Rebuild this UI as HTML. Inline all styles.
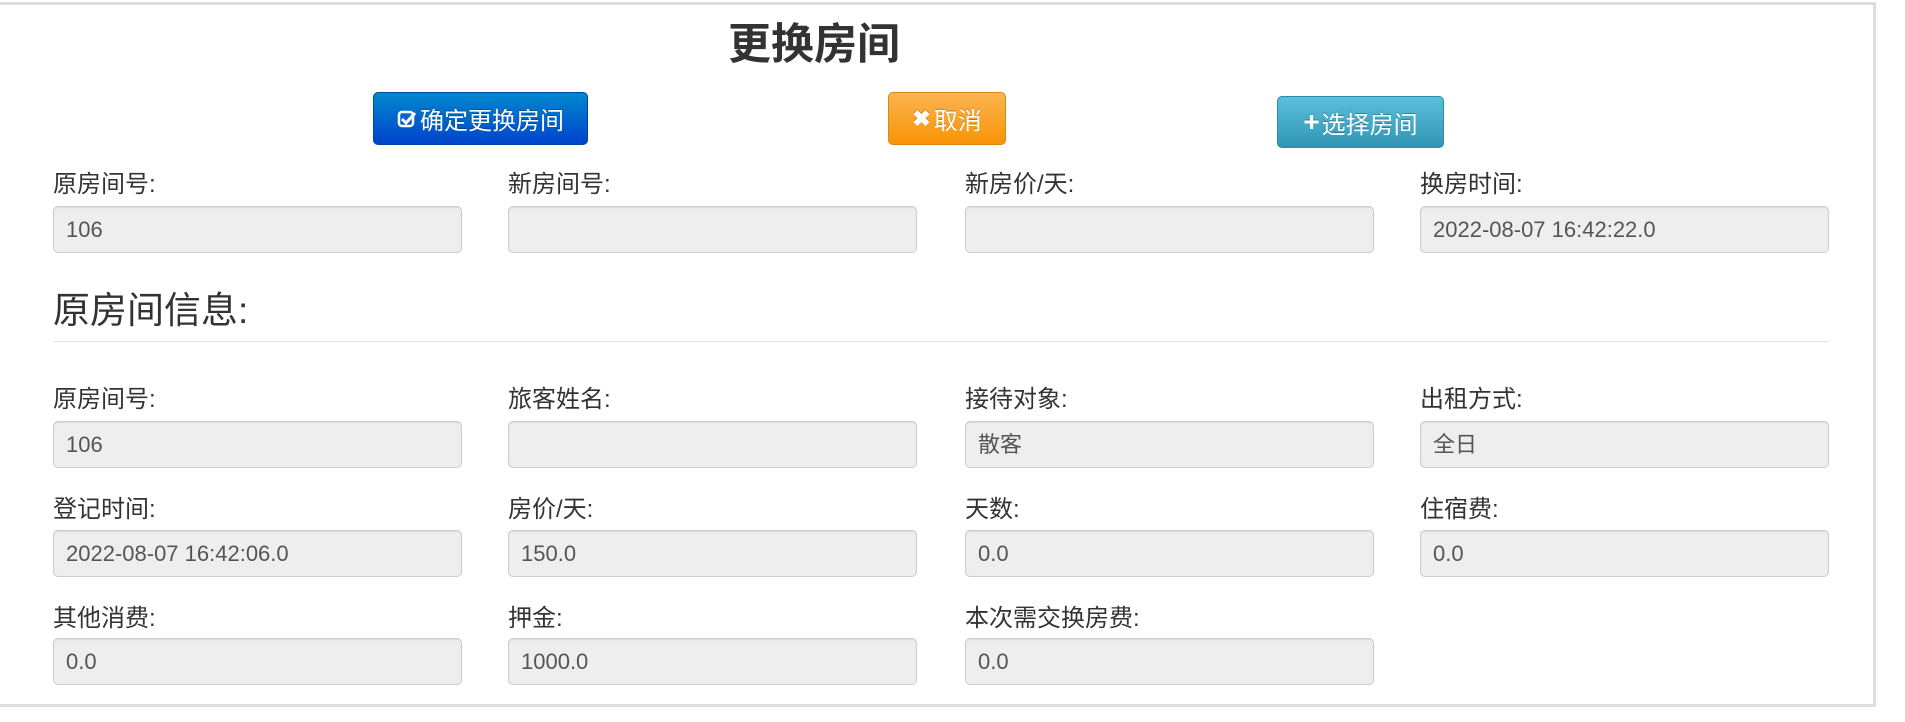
<!DOCTYPE html>
<html><head><meta charset="utf-8"><style>
*{box-sizing:border-box;margin:0;padding:0}
body{width:1905px;height:722px;background:#fff;font-family:"Liberation Sans","Noto Sans CJK SC",sans-serif;color:#333;position:relative;overflow:hidden}
.frame{position:absolute;left:-3px;top:2px;width:1879px;height:705px;border:3px solid #ddd;}
.abs{position:absolute}
.title{left:728px;top:10px;font-size:43px;font-weight:bold;color:#333;white-space:nowrap}
.btn{position:absolute;color:#fff;font-size:24px;border-radius:5px;display:flex;align-items:center;justify-content:center;white-space:nowrap;text-shadow:0 -1px 0 rgba(0,0,0,.25)}
.b1{left:373px;top:92px;width:215px;height:53px;background:linear-gradient(#0088cc,#0044cc);border:1px solid #0044aa}
.b2{left:888px;top:92px;width:118px;height:53px;background:linear-gradient(#fbb450,#f89406);border:1px solid #d88a10}
.b3{left:1277px;top:96px;width:167px;height:52px;background:linear-gradient(#5bc0de,#2f96b4);border:1px solid #2f8aa4}
.lbl{position:absolute;font-size:24px;color:#333;white-space:nowrap}
.inp{position:absolute;height:47px;width:409px;background:#eee;border:1px solid #ccc;border-radius:5px;font-size:22px;color:#555;padding-left:12px;line-height:45px;box-shadow:inset 0 1px 1px rgba(0,0,0,.075)}
.h2{left:53px;top:280px;font-size:37px;color:#333}
.hr{left:53px;top:341px;width:1776px;height:1px;background:#e5e5e5}
</style></head><body>
<div class="frame"></div>
<div class="abs title">更换房间</div>
<div class="btn b1"><svg width="20" height="20" viewBox="0 0 20 20" style="margin-right:3px"><rect x="2" y="3" width="14" height="14" rx="3" fill="none" stroke="#fff" stroke-width="2.5"/><path d="M5 10l4 4 9-10" fill="none" stroke="#fff" stroke-width="3"/></svg>确定更换房间</div>
<div class="btn b2"><span style="font-size:22px;font-weight:bold;margin-right:3px">✖</span>取消</div>
<div class="btn b3"><span style="font-size:28px;font-weight:bold;margin-right:2px">+</span>选择房间</div>

<div class="lbl" style="left:53px;top:164px">原房间号:</div>
<div class="lbl" style="left:508px;top:164px">新房间号:</div>
<div class="lbl" style="left:965px;top:164px">新房价/天:</div>
<div class="lbl" style="left:1420px;top:164px">换房时间:</div>
<div class="inp" style="left:53px;top:206px">106</div>
<div class="inp" style="left:508px;top:206px"></div>
<div class="inp" style="left:965px;top:206px"></div>
<div class="inp" style="left:1420px;top:206px">2022-08-07 16:42:22.0</div>

<div class="abs h2">原房间信息:</div>
<div class="abs hr"></div>

<div class="lbl" style="left:53px;top:379px">原房间号:</div>
<div class="lbl" style="left:508px;top:379px">旅客姓名:</div>
<div class="lbl" style="left:965px;top:379px">接待对象:</div>
<div class="lbl" style="left:1420px;top:379px">出租方式:</div>
<div class="inp" style="left:53px;top:421px">106</div>
<div class="inp" style="left:508px;top:421px"></div>
<div class="inp" style="left:965px;top:421px">散客</div>
<div class="inp" style="left:1420px;top:421px">全日</div>

<div class="lbl" style="left:53px;top:489px">登记时间:</div>
<div class="lbl" style="left:508px;top:489px">房价/天:</div>
<div class="lbl" style="left:965px;top:489px">天数:</div>
<div class="lbl" style="left:1420px;top:489px">住宿费:</div>
<div class="inp" style="left:53px;top:530px">2022-08-07 16:42:06.0</div>
<div class="inp" style="left:508px;top:530px">150.0</div>
<div class="inp" style="left:965px;top:530px">0.0</div>
<div class="inp" style="left:1420px;top:530px">0.0</div>

<div class="lbl" style="left:53px;top:598px">其他消费:</div>
<div class="lbl" style="left:508px;top:598px">押金:</div>
<div class="lbl" style="left:965px;top:598px">本次需交换房费:</div>
<div class="inp" style="left:53px;top:638px">0.0</div>
<div class="inp" style="left:508px;top:638px">1000.0</div>
<div class="inp" style="left:965px;top:638px">0.0</div>
</body></html>
